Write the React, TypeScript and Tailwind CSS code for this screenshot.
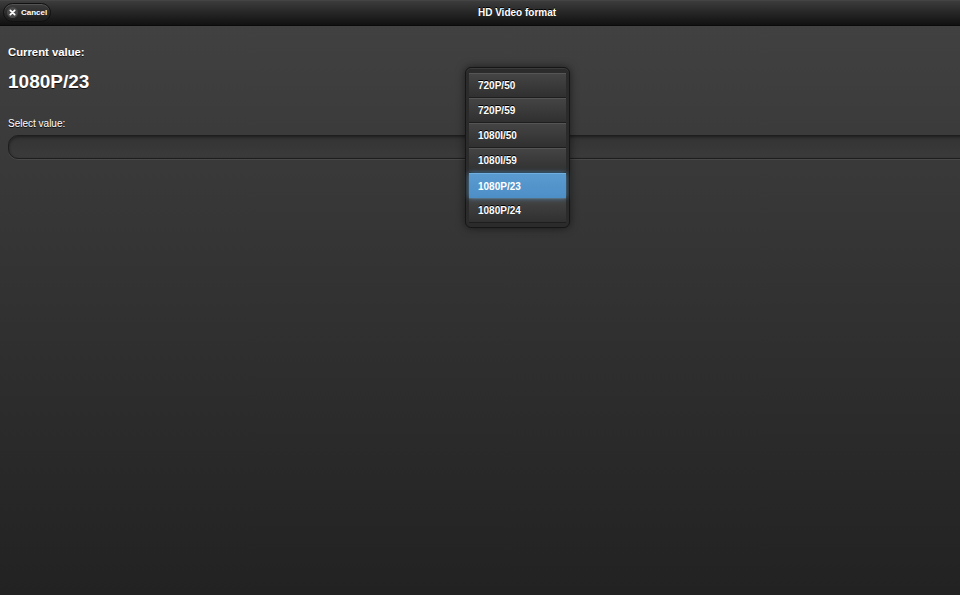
const options = ["720P/50", "720P/59", "1080I/50", "1080I/59", "1080P/23", "1080P/24"];

export default function App() {
  const current = "1080P/23";

  return (
    <div className="w-[960px] h-[595px] overflow-hidden bg-[#222] font-['Liberation_Sans',Arial,sans-serif]">
      <div className="w-[1034px] h-[595px] flex flex-col relative">
        {/* header */}
        <div className="h-[26px] shrink-0 relative flex items-center justify-center bg-gradient-to-b from-[#3c3c3c] to-[#111] border-t border-t-[#444] border-b border-b-[#0a0a0a]">
          <button className="absolute left-[3px] top-[2px] h-[19px] w-[48px] pl-[3px] flex items-center gap-[3px] rounded-full border border-[#111] bg-gradient-to-b from-[#3d3d3d] to-[#1c1c1c] shadow-[inset_0_1px_0_rgba(255,255,255,0.12)]">
            <span className="w-[11px] h-[11px] rounded-full bg-[#4a4a4a] flex items-center justify-center">
              <svg width="7" height="7" viewBox="0 0 8 8">
                <path d="M1.5 1.5L6.5 6.5M6.5 1.5L1.5 6.5" stroke="white" strokeWidth="2" strokeLinecap="round" />
              </svg>
            </span>
            <span className="text-[8px] font-bold text-white">Cancel</span>
          </button>
          <h1 className="text-[10px] font-bold text-white -mt-[1px] [text-shadow:0_-1px_0_#000]">HD Video format</h1>
        </div>

        {/* content */}
        <div className="flex-1 bg-gradient-to-b from-[#414141] to-[#222] rounded-b-[6px] px-[8px] pt-[19px]">
          <div className="text-[11.3px] font-bold text-white leading-[14px] [text-shadow:0_1px_0_#111]">Current value:</div>
          <div className="mt-[12px] text-[19px] font-bold text-white leading-[22px] [text-shadow:0_1px_0_#111]">{current}</div>
          <div className="mt-[25px] text-[10px] text-white leading-[12px] [text-shadow:0_1px_0_#111]">Select value:</div>
          <div className="mt-[5px] h-[24px] rounded-[10px] border border-[#1e1e1e] bg-gradient-to-b from-[#333] to-[#3b3b3b] shadow-[inset_0_1px_3px_rgba(0,0,0,0.45),0_1px_0_rgba(255,255,255,0.08)]" />
        </div>

        {/* popup menu */}
        <div className="absolute left-[465px] top-[67px] w-[105px] rounded-[6px] border border-[#161616] bg-[#2b2b2b] px-[3px] pt-[5px] pb-[4px] shadow-[0_0_8px_rgba(0,0,0,0.55),inset_0_1px_0_rgba(255,255,255,0.08)]">
          {options.map((o) =>
            o === current ? (
              <div
                key={o}
                className="h-[25px] flex items-center pl-[9px] text-[10px] font-bold text-white bg-gradient-to-b from-[#5a9bd0] to-[#4c8fc6] border-t border-t-[#6fb0e0] shadow-[0_0_5px_rgba(90,160,220,0.8)] relative z-10"
              >
                {o}
              </div>
            ) : (
              <div
                key={o}
                className="h-[25px] flex items-center pl-[9px] text-[10px] font-bold text-white bg-gradient-to-b from-[#444] to-[#303030] border-t border-t-[#555] border-b border-b-[#1e1e1e] [text-shadow:0_-1px_0_#000]"
              >
                {o}
              </div>
            )
          )}
        </div>
      </div>
    </div>
  );
}
